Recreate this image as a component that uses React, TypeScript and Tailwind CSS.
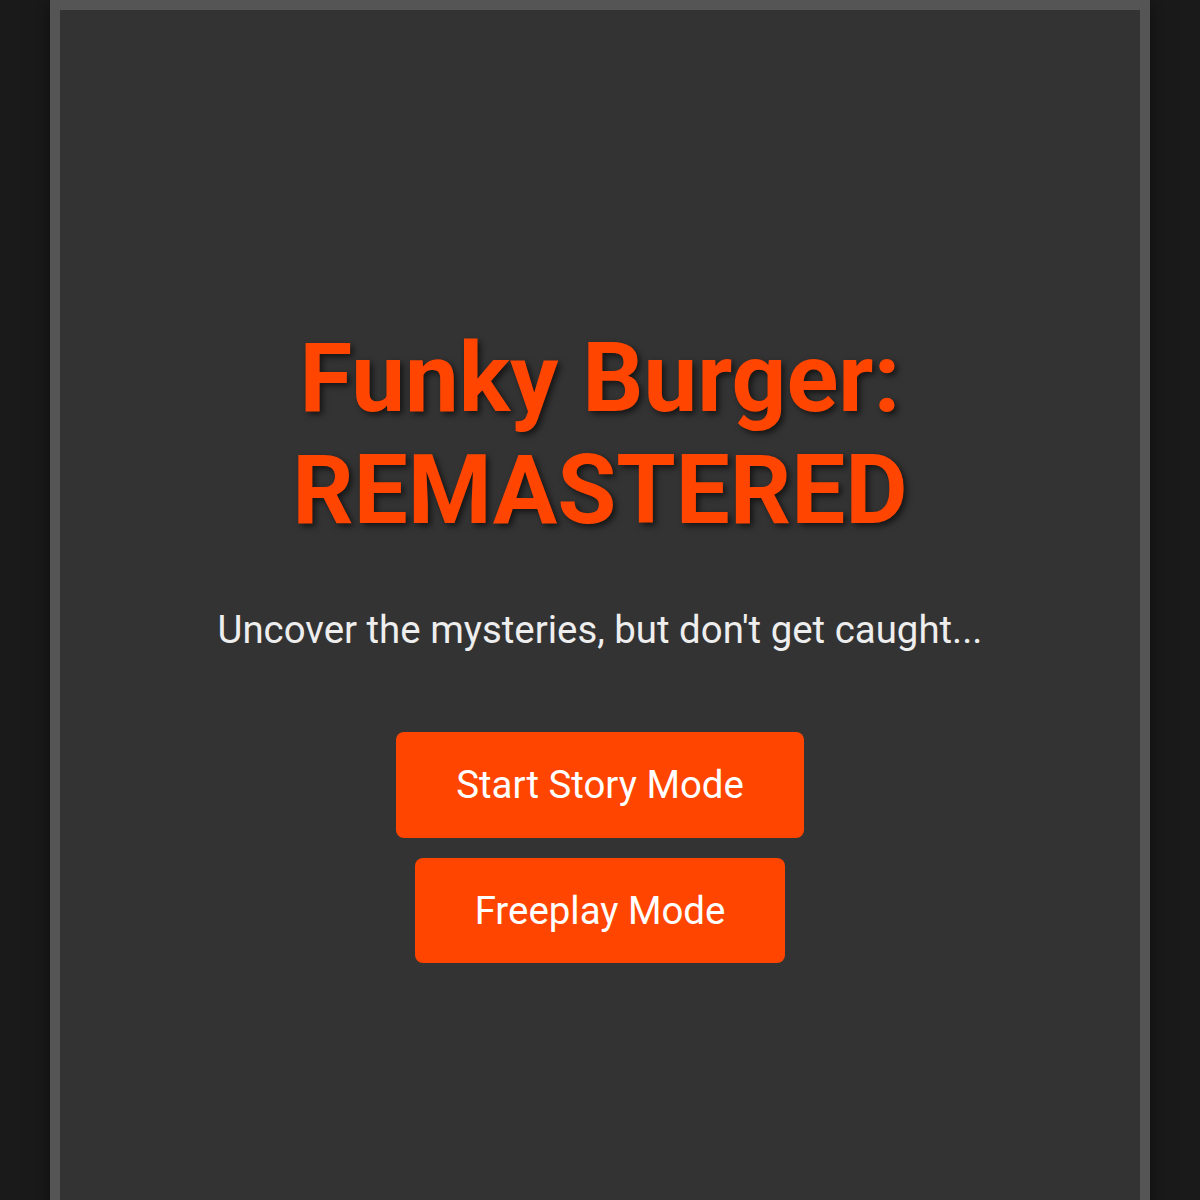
export default function App() {
  return (
    <div className="min-h-screen bg-[#1a1a1a] font-['Roboto',sans-serif]">
      <div className="mx-auto w-[1100px] min-h-[1300px] border-[10px] border-[#555] bg-[#333] shadow-[0_0_20px_rgba(0,0,0,0.5)]">
        <div className="flex flex-col items-center pt-[312px] text-center">
          <h1 className="text-[96px] font-bold leading-[1.17] text-[#ff4500] [text-shadow:3px_3px_6px_rgba(0,0,0,0.6)]">
            Funky Burger:
            <br />
            REMASTERED
          </h1>
          <p className="mt-[54px] text-[38.4px] leading-normal text-[#eee]">
            Uncover the mysteries, but don't get caught...
          </p>
          <div className="mt-[74px] flex flex-col items-center gap-5">
            <button className="rounded-lg bg-[#ff4500] px-[60px] py-6 text-[38.4px] leading-normal text-white">
              Start Story Mode
            </button>
            <button className="rounded-lg bg-[#ff4500] px-[60px] py-6 text-[38.4px] leading-normal text-white">
              Freeplay Mode
            </button>
          </div>
        </div>
      </div>
    </div>
  );
}
